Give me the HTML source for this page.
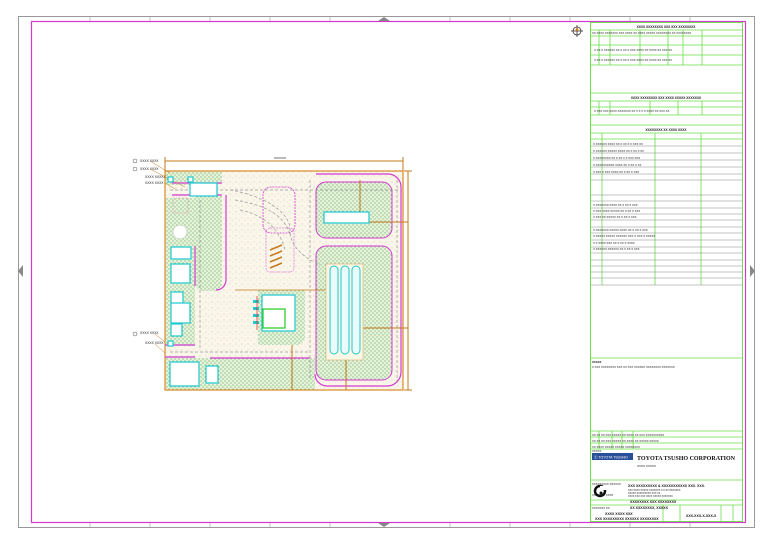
<!DOCTYPE html>
<html><head><meta charset="utf-8"><style>
html,body{margin:0;padding:0;background:#fff;width:768px;height:542px;overflow:hidden}
svg{display:block}
text{font-family:"Liberation Sans",sans-serif;fill:#111}
</style></head><body>
<svg width="768" height="542" viewBox="0 0 768 542" xmlns="http://www.w3.org/2000/svg">
<defs>
<pattern id="gr" width="4" height="4" patternUnits="userSpaceOnUse"><rect width="4" height="4" fill="#e6f3d8"/><circle cx="1" cy="1" r="0.7" fill="#8b8"/><circle cx="3" cy="3" r="0.7" fill="#8b8"/></pattern>
<pattern id="sd" width="6" height="6" patternUnits="userSpaceOnUse"><rect width="6" height="6" fill="#faf6ea"/><circle cx="2" cy="2" r="0.5" fill="#cba"/><circle cx="5" cy="4" r="0.4" fill="#bcb"/></pattern>
</defs>
<rect x="18.5" y="16.5" width="736" height="511" fill="none" stroke="#999" stroke-width="1"/>
<rect x="31.5" y="21.5" width="714" height="501" fill="none" stroke="#d23ad2" stroke-width="1.2"/>
<g stroke="#999" stroke-width="0.6">
<line x1="90" y1="17" x2="90" y2="21"/><line x1="150" y1="17" x2="150" y2="21"/><line x1="210" y1="17" x2="210" y2="21"/><line x1="270" y1="17" x2="270" y2="21"/><line x1="330" y1="17" x2="330" y2="21"/><line x1="450" y1="17" x2="450" y2="21"/><line x1="510" y1="17" x2="510" y2="21"/><line x1="570" y1="17" x2="570" y2="21"/><line x1="630" y1="17" x2="630" y2="21"/><line x1="690" y1="17" x2="690" y2="21"/>
<line x1="90" y1="523" x2="90" y2="527"/><line x1="150" y1="523" x2="150" y2="527"/><line x1="210" y1="523" x2="210" y2="527"/><line x1="270" y1="523" x2="270" y2="527"/><line x1="330" y1="523" x2="330" y2="527"/><line x1="450" y1="523" x2="450" y2="527"/><line x1="510" y1="523" x2="510" y2="527"/><line x1="570" y1="523" x2="570" y2="527"/><line x1="630" y1="523" x2="630" y2="527"/><line x1="690" y1="523" x2="690" y2="527"/>
</g>
<polygon points="384,17 390,21 378,21" fill="#888"/><polygon points="384,527 390,523 378,523" fill="#888"/>
<polygon points="18,271 23,265 23,277" fill="#888"/><polygon points="755,271 750,265 750,277" fill="#888"/>

<rect x="165" y="171" width="238" height="219" fill="url(#sd)"/>
<path d="M165 171h57v8a6 6 0 0 1-6 6h-51z" fill="url(#gr)"/>
<path d="M165 198h30v148h-30z" fill="url(#gr)"/>
<path d="M195 195h27v88a8 8 0 0 1-8 8h-11a8 8 0 0 1-8-8z" fill="url(#gr)"/>
<rect x="316" y="182" width="76" height="56" rx="10" fill="url(#gr)" stroke="#d23ad2" stroke-width="1"/>
<rect x="316" y="246" width="76" height="134" rx="10" fill="url(#gr)" stroke="#d23ad2" stroke-width="1"/>
<path d="M258 290h47v47a8 8 0 0 1-8 8h-39z" fill="url(#gr)"/>
<rect x="165" y="358" width="150" height="32" fill="url(#gr)"/>
<rect x="165" y="171" width="238" height="219" fill="none" stroke="#d98a2a" stroke-width="1.2"/>
<g fill="none" stroke="#d23ad2" stroke-width="1.2">
<path d="M316 174h72a13 13 0 0 1 13 13v185a14 14 0 0 1-14 14h-60a12 12 0 0 1-12-12"/>
<path d="M172 183h50M172 195h50M195 246v40M210 358h100"/>
<path d="M165 345h30M165 357h30M226 195v85a10 10 0 0 1-10 10"/>
<path d="M263 225a8 8 0 0 0 8 8h16a8 8 0 0 0 8-8v-30a8 8 0 0 0-8-8h-16a8 8 0 0 0-8 8z" stroke-dasharray="2 1" stroke-width="0.8"/>
</g>
<g fill="none" stroke="#999" stroke-width="0.7" stroke-dasharray="3 2">
<path d="M170 190h230M200 200v150M170 352h140M310 180v200M397 180v205M230 190c30 5 60 20 60 40s20 30 30 35M235 200c30 5 50 15 55 35M240 210c25 5 40 20 45 40"/>
</g>
<g stroke="#c77a1e" stroke-width="1" fill="none">
<path d="M165 161h238M165 157v14M403 157v14M408 171v219M404 171h8M404 390h8"/>
<path d="M363 222h45M363 328h45M292 345v45M346 355v35M360 180v40"/>
<path d="M235 290h90" stroke-width="0.7"/>
</g>
<text x="280" y="159" font-size="3" text-anchor="middle">XXXXXX</text>
<g font-size="3.3"><text x="140" y="162">XXXX XXXX</text><text x="140" y="170">XXXX XXXX</text><text x="145" y="178">XXXX XXXXX</text><text x="145" y="184">XXXX XXXX</text><text x="140" y="334">XXXX XXXX</text><text x="145" y="344">XXXX XXXX</text></g>
<g stroke="#c77a1e" stroke-width="0.5"><path d="M150 161l20 12M150 169l35 18M165 183l10 6M155 334l10 8M155 344l10 9"/></g>
<circle cx="135" cy="161" r="2" fill="none" stroke="#555" stroke-width="0.5"/><circle cx="135" cy="169" r="2" fill="none" stroke="#555" stroke-width="0.5"/><circle cx="135" cy="334" r="2" fill="none" stroke="#555" stroke-width="0.5"/>
<g fill="#fff" stroke="#1cc9cf" stroke-width="1.2">
<rect x="190" y="183" width="27" height="13"/>
<rect x="171" y="247" width="20" height="12"/>
<rect x="171" y="264" width="19" height="19"/>
<rect x="171" y="292" width="12" height="12"/>
<rect x="171" y="303" width="19" height="20"/>
<rect x="171" y="324" width="11" height="12"/>
<rect x="170" y="362" width="29" height="24"/>
<rect x="206" y="366" width="12" height="17"/>
<rect x="324" y="212" width="45" height="11"/>
<rect x="262" y="295" width="33" height="36"/>
<rect x="168" y="177" width="5" height="5"/><rect x="188" y="177" width="5" height="5"/><rect x="168" y="341" width="5" height="5"/>
</g>
<rect x="173" y="198" width="15" height="15" fill="none" stroke="#d9a" stroke-width="0.6" stroke-dasharray="2 1"/>
<circle cx="180" cy="232" r="7" fill="#fff" stroke="#bbb" stroke-width="0.5"/>
<rect x="326" y="264" width="37" height="96" fill="#fdf8e6" stroke="#d9c08a" stroke-width="0.8"/>
<g fill="#e9fbfb" stroke="#1cc9cf" stroke-width="1"><rect x="330" y="266" width="8" height="88" rx="4"/><rect x="341" y="266" width="8" height="88" rx="4"/><rect x="352" y="266" width="8" height="88" rx="4"/></g>
<rect x="263" y="309" width="22" height="19" fill="#fff" stroke="#2c2" stroke-width="1.2"/>
<g fill="#1cc9cf"><rect x="253" y="300" width="6" height="3"/><rect x="253" y="307" width="6" height="3"/><rect x="253" y="314" width="6" height="3"/><rect x="253" y="321" width="6" height="3"/></g>
<path d="M257 296v34" stroke="#e33" stroke-width="0.8"/>
<g stroke="#c77a1e" stroke-width="1.5"><path d="M270 250l12 -5M270 256l12 -5M270 262l12 -5M270 268l12 -5"/></g>
<rect x="266" y="228" width="28" height="44" rx="4" fill="none" stroke="#d23ad2" stroke-width="0.5" stroke-dasharray="2 1"/>

<rect x="590.5" y="22.5" width="152" height="499" fill="none" stroke="#6be04a" stroke-width="1"/>
<circle cx="577" cy="31" r="4" fill="#fff" stroke="#333" stroke-width="0.8"/><path d="M577 25v12M571 31h12" stroke="#333" stroke-width="0.8"/><path d="M577 27l2 4h-4z" fill="#c77a1e"/>
<g stroke="#6be04a" stroke-width="0.8" fill="none">
<path d="M591 30h151M591 36h151M591 45h151M591 55h151M591 65h151M591 93h151M591 101h151M591 107h151M591 115h151M591 125h151M591 133h151M591 139h151"/>
<path d="M599 30v35M610 30v35M640 30v35M668 30v35M683 30v35M702 30v35"/>
<path d="M599 101v14M610 101v14M650 101v14M678 101v14M702 101v14"/>
<path d="M602 133v152M655 133v152M701 133v152"/>
<path d="M591 358h151M591 431h151M591 437h151M591 443h151M591 449h151M591 480h151M591 500h151M591 505h151"/>
<path d="M599 431v18M612 431v18M622 431v18M633 431v18M663 505v17M680 505v17M721 505v17M733 505v17"/>
</g>
<g stroke="#888" stroke-width="0.6">
<path d="M591 146h151M591 153h151M591 160h151M591 167h151M591 174h151M591 180h151M591 195h151M591 201h151M591 208h151M591 214h151M591 220h151M591 227h151M591 233h151M591 240h151M591 247h151M591 253h151M591 260h151M591 266h151M591 272h151M591 278h151M591 285h151"/>
</g>
<g font-size="3.2" font-weight="bold">
<text x="666" y="28" text-anchor="middle">XXXX XXXXXXXX XXX XXX XXXXXXXX</text>
<text x="666" y="99" text-anchor="middle">XXXX XXXXXXXX XXX XXXX XXXXX XXXXXXX</text>
<text x="666" y="131" text-anchor="middle">XXXXXXXX XX XXXX XXXX</text>
</g>
<g font-size="2.8">
<text x="592" y="34">XX XXXX XXXXXXX XXX XXXX XX XXXX XXXXX XXXXXXXX XX XXXXXXXX</text>
<text x="594" y="51">X XX X XXXXXX   XX X XX X XXX   XXXX XX  XXXX   XX XXX XX</text>
<text x="594" y="61">X XX X XXXXXX   XX X XX X XXX   XXXX XX  XXXX   XX XXX XX</text>
<text x="594" y="112">X XXX  XXX XXXX XXXXXXX  XX X X X X  XXXX  XX XXX XX</text>
<text x="593" y="145">X  XXXXXX XXXX        XX X XX X X XXX       XX</text>
<text x="593" y="152">X  XXXXXX XXXXX XXXX   XX X XX X          XX</text>
<text x="593" y="159">X  XXXXXXXX            XX X XX X X XXX     XXX</text>
<text x="593" y="166">X  XXXXXXXXXX XXXX     XX X XX X          XX</text>
<text x="593" y="173">X  XXX X XXX XXXX      XX X XX X          XXX</text>
<text x="593" y="206">X  XXXXXXX XXXX        XX X XX X          XXX</text>
<text x="593" y="212">X  XXX XXXX XXXXX      XX X XX X          XXX</text>
<text x="593" y="218">X  XXX XX XXXXX        XX X XX X          XXX</text>
<text x="593" y="231">X  XXXXXXX XXXXX XXXX  XX X XX X          XXX</text>
<text x="593" y="237">X  XXXXX XXXXX XXXXXX  XXX X XXX X        XXXXX</text>
<text x="593" y="244">X  X XXXX XXX          XX X XX X          XXXX</text>
<text x="593" y="250">X  XXXXXX XXXXXX       XX X XX X          XXX</text>
<text x="592" y="363" font-weight="bold">XXXXX</text>
<text x="592" y="368">X XXX XXXXXXXX XXX XX XXX XXXXXX XXXXXXXX XXXXXXX</text>
<text x="592" y="436">XX  XX XX XXX  XXXXX  XX   XXXX XX XXX XXXXXXXXXX</text>
<text x="592" y="442">XX  XX XX XXX  XXXXX  XX   XXXX XX XXXXX XXXXX</text>
<text x="592" y="448">XX  XXXX  XXXXX  XXXXX          XXXXXXXX</text>
<text x="592" y="452">XXXXX</text>
<text x="592" y="485">XXXXXXXXX XXXXXX</text>
<text x="592" y="496">XXXXXXX XXXX</text>
<text x="592" y="509">XXXXXXX XX</text>
</g>
<rect x="592" y="453" width="41" height="7" fill="#2a4f9a"/>
<text x="594" y="458.5" font-size="3.5" style="fill:#fff">Ⓣ TOYOTA TSUSHO</text>
<text x="637" y="460" font-size="6" textLength="98" lengthAdjust="spacingAndGlyphs" font-weight="bold" style="font-family:'Liberation Serif',serif">TOYOTA TSUSHO CORPORATION</text>
<text x="637" y="467" font-size="3">XXXX XXXXX</text>
<circle cx="600" cy="491" r="5" fill="none" stroke="#111" stroke-width="2.5"/><rect x="600" y="486" width="6" height="4" fill="#fff"/><circle cx="601" cy="493" r="1.5" fill="#111"/>
<g font-size="3.5" font-weight="bold"><text x="628" y="487">XXX XXXXXXXXX &amp; XXXXXXXXXXX XXX. XXX.</text><text x="630" y="503">XXXXXXXX XXX XXXXXXXX</text><text x="630" y="509">XX XXXXXXXX, XXXXX</text><text x="605" y="515">XXXX XXXX XXX</text><text x="595" y="520">XXX XXXXXXXXX XXXXXX XXXXXXXX</text><text x="686" y="517">XXX-XXX-X-XXX-X</text></g>
<g font-size="2.4"><text x="628" y="491">XXX XXXX XXXXX XXXXXXX X X XX XXXXXXX</text><text x="628" y="494">XXXXX XXXXXXXXX XXX XX</text><text x="628" y="497">XXXX  XXX XXX XXXX XXXXX XXXXXXX</text></g>
</svg>
</body></html>
